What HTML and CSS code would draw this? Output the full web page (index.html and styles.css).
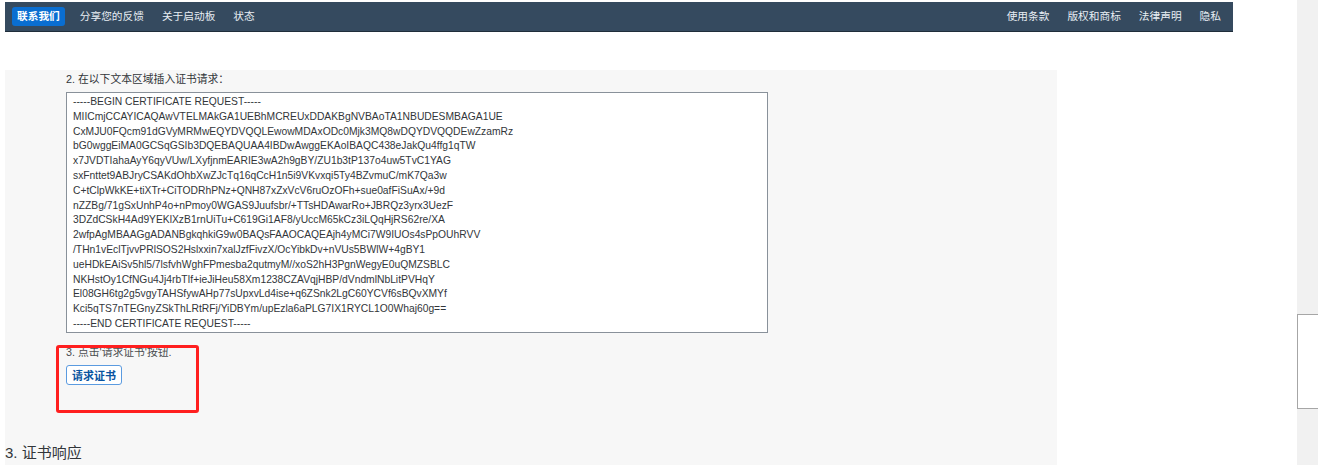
FILE: index.html
```
<!DOCTYPE html>
<html lang="zh-CN">
<head>
    <meta charset="UTF-8"/>
    <link rel="stylesheet" href="styles.css">
</head>
<body>
<div class="page">
    <main class="page__main">
        <nav class="shell-bar">
            <div class="shell-bar__group">
                <a class="shell-bar__link shell-bar__link--active">联系我们</a>
                <a class="shell-bar__link">分享您的反馈</a>
                <a class="shell-bar__link">关于启动板</a>
                <a class="shell-bar__link">状态</a>
            </div>
            <div class="shell-bar__group">
                <a class="shell-bar__link">使用条款</a>
                <a class="shell-bar__link">版权和商标</a>
                <a class="shell-bar__link">法律声明</a>
                <a class="shell-bar__link">隐私</a>
            </div>
        </nav>
        <section class="panel">
            <div class="panel__step">
                <p class="panel__label">2. 在以下文本区域插入证书请求：</p>
                <textarea class="panel__csr" readonly spellcheck="false">-----BEGIN CERTIFICATE REQUEST-----
MIICmjCCAYICAQAwVTELMAkGA1UEBhMCREUxDDAKBgNVBAoTA1NBUDESMBAGA1UE
CxMJU0FQcm91dGVyMRMwEQYDVQQLEwowMDAxODc0Mjk3MQ8wDQYDVQQDEwZzamRz
bG0wggEiMA0GCSqGSIb3DQEBAQUAA4IBDwAwggEKAoIBAQC438eJakQu4ffg1qTW
x7JVDTIahaAyY6qyVUw/LXyfjnmEARIE3wA2h9gBY/ZU1b3tP137o4uw5TvC1YAG
sxFnttet9ABJryCSAKdOhbXwZJcTq16qCcH1n5i9VKvxqi5Ty4BZvmuC/mK7Qa3w
C+tClpWkKE+tiXTr+CiTODRhPNz+QNH87xZxVcV6ruOzOFh+sue0afFiSuAx/+9d
nZZBg/71gSxUnhP4o+nPmoy0WGAS9Juufsbr/+TTsHDAwarRo+JBRQz3yrx3UezF
3DZdCSkH4Ad9YEKlXzB1rnUiTu+C619Gi1AF8/yUccM65kCz3iLQqHjRS62re/XA
2wfpAgMBAAGgADANBgkqhkiG9w0BAQsFAAOCAQEAjh4yMCi7W9IUOs4sPpOUhRVV
/THn1vEclTjvvPRlSOS2Hslxxin7xalJzfFivzX/OcYibkDv+nVUs5BWlW+4gBY1
ueHDkEAiSv5hl5/7lsfvhWghFPmesba2qutmyM//xoS2hH3PgnWegyE0uQMZSBLC
NKHstOy1CfNGu4Jj4rbTIf+ieJiHeu58Xm1238CZAVqjHBP/dVndmlNbLitPVHqY
El08GH6tg2g5vgyTAHSfywAHp77sUpxvLd4ise+q6ZSnk2LgC60YCVf6sBQvXMYf
Kci5qTS7nTEGnyZSkThLRtRFj/YiDBYm/upEzla6aPLG7IX1RYCL1O0Whaj60g==
-----END CERTIFICATE REQUEST-----</textarea>
            </div>
            <div class="panel__step panel__step--submit">
                <p class="panel__label panel__label--muted">3. 点击'请求证书'按钮.</p>
                <button class="panel__btn" type="button">请求证书</button>
                <span class="panel__mark" aria-hidden="true"></span>
            </div>
            <h2 class="panel__heading">3. 证书响应</h2>
        </section>
    </main>
    <aside class="page__side">
        <div class="page__side-box"></div>
    </aside>
</div>
</body>
</html>
```
FILE: styles.css
```
html, body {
    margin: 0;
    padding: 0;
    height: 100%;
    background: #ffffff;
    font-family: "Liberation Sans", "Noto Sans CJK SC", sans-serif;
}

.page {
    display: flex;
    height: 465px;
    overflow: hidden;
}

.page__main {
    width: 1297px;
    padding: 2px 0 0 5px;
    box-sizing: border-box;
    display: flex;
    flex-direction: column;
}

.page__side {
    width: 21px;
    background: #f1f1f1;
    padding-top: 314px;
}

.page__side-box {
    height: 93px;
    border: 1px solid #a6a6a6;
    border-right: none;
    background: #ffffff;
}

.shell-bar {
    width: 1228px;
    height: 30px;
    box-sizing: border-box;
    background: #354a5f;
    border-bottom: 1px solid #1f2d3a;
    display: flex;
    justify-content: space-between;
    align-items: center;
    padding: 0 12px 0 7px;
}

.shell-bar__group {
    display: flex;
    align-items: center;
    gap: 18px;
}

.shell-bar__link {
    color: #e8eef4;
    font-size: 10.7px;
    line-height: 19px;
    white-space: nowrap;
}

.shell-bar__link--active {
    background: #0a6ed1;
    color: #ffffff;
    font-weight: bold;
    padding: 0 5px;
    border-radius: 3px;
    margin-right: -3px;
}

.panel {
    margin-top: 38px;
    width: 1052px;
    flex: 1;
    background: #f7f7f7;
    padding: 1px 0 0 0;
}

.panel__step {
    padding-left: 61px;
}

.panel__label {
    margin: 2px 0 6px;
    font-size: 10.8px;
    line-height: 13px;
    color: #32363a;
}

.panel__label--muted {
    color: #4a4d50;
}

.panel__csr {
    display: block;
    width: 702px;
    height: 241px;
    box-sizing: border-box;
    margin: 0;
    padding: 2px 6px;
    border: 1px solid #89919a;
    border-radius: 0;
    background: #ffffff;
    color: #32363a;
    font-family: "Liberation Sans", sans-serif;
    font-size: 10.3px;
    line-height: 14.8px;
    resize: none;
    overflow: hidden;
    white-space: pre;
}

.panel__step--submit {
    position: relative;
    padding-top: 11px;
    height: 66px;
}

.panel__step--submit .panel__label {
    margin-bottom: 6px;
}

.panel__btn {
    display: block;
    height: 20px;
    padding: 0 5px;
    border: 1px solid #5b9be0;
    border-radius: 3px;
    background: #ffffff;
    color: #0854a0;
    font-family: "Liberation Sans", "Noto Sans CJK SC", sans-serif;
    font-size: 11px;
    font-weight: bold;
}

.panel__mark {
    position: absolute;
    left: 51px;
    top: 12px;
    width: 137px;
    height: 62px;
    border: 3px solid #ff1f1f;
    border-radius: 3px;
}

.panel__heading {
    margin: 31px 0 0;
    font-size: 15px;
    font-weight: normal;
    color: #32363a;
}
```
